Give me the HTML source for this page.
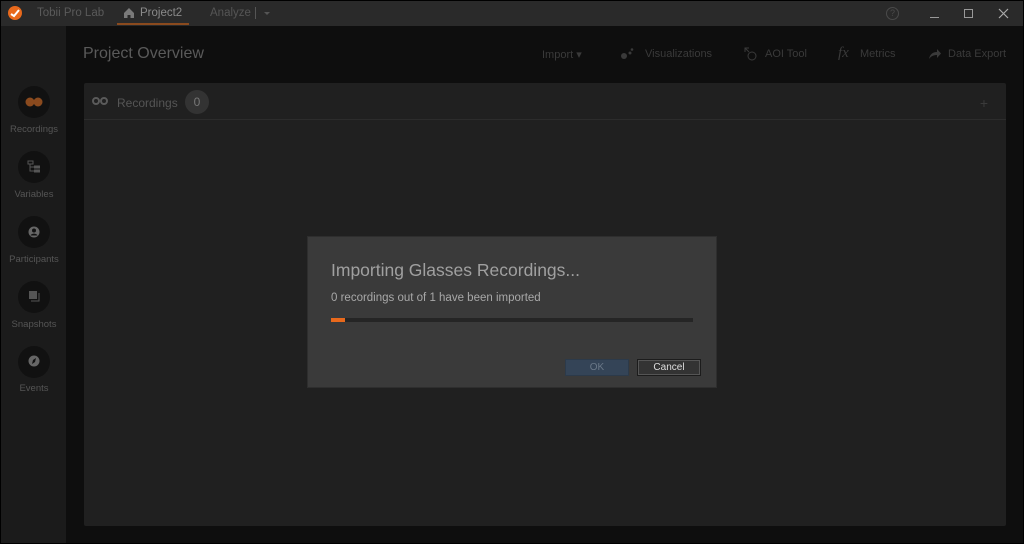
<!DOCTYPE html>
<html><head><style>
*{margin:0;padding:0;box-sizing:border-box}
body{width:1024px;height:544px;background:#000;font-family:"Liberation Sans",sans-serif;position:relative;overflow:hidden}
.a{position:absolute}
#title{left:1px;top:1px;width:1022px;height:25px;background:#2a2a2a}
#side{left:1px;top:26px;width:65px;height:517px;background:#1b1b1b}
#main{left:66px;top:26px;width:957px;height:517px;background:#0e0e0e}
#panel{left:84px;top:83px;width:922px;height:443px;background:#202020;border-radius:2px}
.t{color:#3a3a3a;font-size:11px}
.ic{width:32px;height:32px;border-radius:50%;background:#111;left:18px}
.lbl{color:#555;font-size:9.5px;width:66px;text-align:center;left:1px}
</style></head><body>
<div class="a" id="title"></div>
<div class="a" style="left:8px;top:6px;width:14px;height:14px;border-radius:50%;background:#e8691c"></div>
<svg class="a" style="left:8px;top:6px" width="14" height="14"><path d="M3 8 L6 10 L11 4" stroke="#fff" stroke-width="2" fill="none"/></svg>
<div class="a" style="left:37px;top:7px;font-size:11.5px;color:#5a5a5a">Tobii Pro Lab</div>
<svg class="a" style="left:123px;top:7px" width="12" height="12"><path d="M1 6 L6 1 L11 6 V11 H7.5 V8 H4.5 V11 H1Z" fill="#7a7a7a"/></svg>
<div class="a" style="left:140px;top:7px;font-size:11.5px;color:#8a8a8a">Project2</div>
<div class="a" style="left:117px;top:23px;width:72px;height:2px;background:#8a4a1e"></div>
<div class="a" style="left:210px;top:7px;font-size:11.5px;color:#555">Analyze</div>
<div class="a" style="left:255px;top:7px;width:1px;height:12px;background:#555"></div>
<div class="a" style="left:264px;top:12px;border:3px solid transparent;border-top:3px solid #555"></div>
<div class="a" style="left:886px;top:7px;width:13px;height:13px;border:1px solid #4a4a4a;border-radius:50%;color:#4a4a4a;font-size:9px;text-align:center;line-height:11px">?</div>
<div class="a" style="left:930px;top:17px;width:9px;height:1px;background:#999"></div>
<div class="a" style="left:964px;top:9px;width:9px;height:9px;border:1px solid #999"></div>
<svg class="a" style="left:998px;top:8px" width="11" height="11"><path d="M1 1L10 10M10 1L1 10" stroke="#aaa" stroke-width="1.2"/></svg>

<div class="a" id="side"></div>
<div class="a" id="main"></div>
<div class="a" style="left:83px;top:45px;font-size:16px;color:#5a5a5a">Project Overview</div>
<div class="a t" style="left:542px;top:48px">Import ▾</div>
<svg class="a" style="left:620px;top:48px" width="14" height="12"><circle cx="4" cy="8" r="3" fill="#3a3a3a"/><circle cx="10" cy="5" r="1.5" fill="#3a3a3a"/><circle cx="12" cy="1.5" r="1.3" fill="#3a3a3a"/></svg>
<div class="a t" style="left:645px;top:48px">Visualizations</div>
<svg class="a" style="left:744px;top:47px" width="14" height="14"><path d="M1 5V1H5M1 1L5 5" stroke="#3a3a3a" fill="none"/><circle cx="8" cy="9" r="4" stroke="#3a3a3a" fill="none"/></svg>
<div class="a t" style="left:765px;top:48px">AOI Tool</div>
<div class="a t" style="left:838px;top:45px;color:#3a3a3a"><i style="font-family:'Liberation Serif';font-size:15px">fx</i></div>
<div class="a t" style="left:860px;top:48px">Metrics</div>
<svg class="a" style="left:928px;top:48px" width="14" height="12"><path d="M1 11C2 6 5 4 9 4V1L13 5.5L9 10V7C6 7 3 8 1 11Z" fill="#3a3a3a"/></svg>
<div class="a t" style="left:948px;top:48px">Data Export</div>

<div class="a" id="panel"></div>
<div class="a" style="left:84px;top:119px;width:922px;height:1px;background:#2c2c2c"></div>
<svg class="a" style="left:92px;top:97px" width="16" height="8"><circle cx="4" cy="4" r="3" stroke="#5a5a5a" stroke-width="2" fill="none"/><circle cx="12" cy="4" r="3" stroke="#5a5a5a" stroke-width="2" fill="none"/></svg>
<div class="a" style="left:117px;top:96px;font-size:12px;color:#555">Recordings</div>
<div class="a" style="left:185px;top:90px;width:24px;height:24px;border-radius:50%;background:#333;color:#777;font-size:12px;text-align:center;line-height:24px">0</div>
<div class="a" style="left:975px;top:95px;width:18px;height:16px;color:#3a3a3a;font-size:14px;text-align:center;line-height:16px">+</div>

<div class="a ic" style="top:86px"></div>
<svg class="a" style="left:25px;top:97px" width="18" height="10"><circle cx="5" cy="5" r="4.5" fill="#8a4a1e"/><circle cx="13" cy="5" r="4.5" fill="#8a4a1e"/></svg>
<div class="a lbl" style="top:124px">Recordings</div>
<div class="a ic" style="top:151px"></div>
<svg class="a" style="left:27px;top:160px" width="14" height="14"><path d="M1 1H6V4H1ZM3 4V11H7M3 7H7" stroke="#555" fill="none"/><rect x="7" y="5.5" width="6" height="3" fill="#555"/><rect x="7" y="9.5" width="6" height="3" fill="#555"/></svg>
<div class="a lbl" style="top:189px">Variables</div>
<div class="a ic" style="top:216px"></div>
<svg class="a" style="left:28px;top:226px" width="12" height="12"><circle cx="6" cy="6" r="5.5" fill="#666"/><circle cx="6" cy="4.5" r="2" fill="#111"/><path d="M2.5 9.5C3.5 7 8.5 7 9.5 9.5Z" fill="#111"/></svg>
<div class="a lbl" style="top:254px">Participants</div>
<div class="a ic" style="top:281px"></div>
<svg class="a" style="left:28px;top:290px" width="12" height="12"><rect x="1" y="1" width="8" height="8" fill="#555"/><path d="M3 11H11V3" stroke="#555" fill="none"/></svg>
<div class="a lbl" style="top:319px">Snapshots</div>
<div class="a ic" style="top:346px"></div>
<svg class="a" style="left:28px;top:355px" width="12" height="12"><circle cx="6" cy="6" r="5.5" fill="#666"/><path d="M4 9L5 5L8 3L7 7Z" fill="#111"/></svg>
<div class="a lbl" style="top:383px">Events</div>

<div class="a" style="left:307px;top:236px;width:410px;height:152px;background:#3a3a3a;border:1px solid #2e2e2e"></div>
<div class="a" style="left:331px;top:260px;font-size:17.5px;color:#a0a0a0">Importing Glasses Recordings...</div>
<div class="a" style="left:331px;top:292px;font-size:11.5px;color:#a8a8a8">0 recordings out of 1 have been imported</div>
<div class="a" style="left:331px;top:318px;width:362px;height:4px;background:#252525"></div>
<div class="a" style="left:331px;top:318px;width:14px;height:4px;background:#e8691c"></div>
<div class="a" style="left:565px;top:359px;width:64px;height:17px;background:#344457;border:1px solid #2c3a4a;color:#6a7888;font-size:10px;text-align:center;line-height:15px">OK</div>
<div class="a" style="left:637px;top:359px;width:64px;height:17px;background:#333;border:1px solid #1c1c1c;box-shadow:inset 0 0 0 1px #555;color:#ddd;font-size:10px;text-align:center;line-height:15px">Cancel</div>
</body></html>
